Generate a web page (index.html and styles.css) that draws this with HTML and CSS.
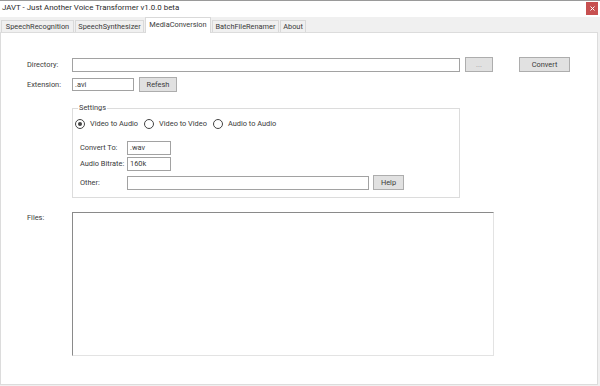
FILE: index.html
```html
<!DOCTYPE html>
<html>
<head>
<meta charset="utf-8">
<link rel="stylesheet" href="styles.css">
</head>
<body>
<div class="window">
  <div class="titlebar">
    <span class="title">JAVT - Just Another Voice Transformer v1.0.0 beta</span>
    <span class="close"><svg width="5" height="5" viewBox="0 0 5 5"><path d="M0.5 0.5 L4.5 4.5 M4.5 0.5 L0.5 4.5" stroke="#fff" stroke-width="1"/></svg></span>
  </div>
  <div class="tabstrip">
    <div class="tab tab-sr">SpeechRecognition</div>
    <div class="tab tab-ss">SpeechSynthesizer</div>
    <div class="tab tab-mc active">MediaConversion</div>
    <div class="tab tab-bf">BatchFileRenamer</div>
    <div class="tab tab-ab">About</div>
  </div>
  <div class="panel">
    <div class="row row-dir">
      <span class="lbl">Directory:</span>
      <span class="input in-dir"></span>
      <span class="btn btn-browse">...</span>
      <span class="btn btn-convert">Convert</span>
    </div>
    <div class="row row-ext">
      <span class="lbl">Extension:</span>
      <span class="input in-ext">.avi</span>
      <span class="btn btn-refresh">Refesh</span>
    </div>
    <div class="group">
      <span class="legend">Settings</span>
      <div class="radios">
        <span class="radio checked"><span class="circle"></span>Video to Audio</span>
        <span class="radio"><span class="circle"></span>Video to Video</span>
        <span class="radio"><span class="circle"></span>Audio to Audio</span>
      </div>
      <div class="grow grow-conv">
        <span class="glbl">Convert To:</span>
        <span class="input in-small">.wav</span>
      </div>
      <div class="grow grow-rate">
        <span class="glbl">Audio Bitrate:</span>
        <span class="input in-small">160k</span>
      </div>
      <div class="grow grow-other">
        <span class="glbl">Other:</span>
        <span class="input in-other"></span>
        <span class="btn btn-help">Help</span>
      </div>
    </div>
    <div class="row row-files">
      <span class="lbl lbl-files">Files:</span>
      <div class="listbox"></div>
    </div>
  </div>
</div>
</body>
</html>
```

FILE: styles.css
```css
* { box-sizing: border-box; }
html, body { margin: 0; padding: 0; }
body {
  width: 600px;
  height: 386px;
  overflow: hidden;
  background: #f0f0f0;
  font-family: Roboto, "Noto Sans", sans-serif;
  font-size: 7.4px;
  color: #3a3a3a;
}
.window {
  width: 600px;
  height: 386px;
  display: flex;
  flex-direction: column;
  background: #f0f0f0;
}
.titlebar {
  height: 17px;
  flex: none;
  background: #fff;
  border-top: 1px solid #9a9a9a;
  display: flex;
  align-items: flex-start;
  justify-content: space-between;
  padding: 0 2px 0 2px;
}
.title {
  line-height: 14px;
  font-size: 7.9px;
  color: #2a2a2a;
}
.close {
  width: 12px;
  height: 13px;
  margin-top: 1px;
  background: #c75050;
  display: flex;
  align-items: center;
  justify-content: center;
}
.close svg { display: block; }
.tabstrip {
  height: 15px;
  flex: none;
  display: flex;
  align-items: flex-end;
  padding-left: 1px;
  position: relative;
  z-index: 1;
}
.tab {
  height: 12px;
  border: 1px solid #d9d9d9;
  border-bottom: none;
  background: #f0f0f0;
  display: flex;
  align-items: center;
  justify-content: center;
  line-height: 10px;
  white-space: nowrap;
}
.tab + .tab { margin-left: 1px; }
.tab-sr { width: 73px; }
.tab-ss { width: 69px; }
.tab-mc { width: 66px; }
.tab-bf { width: 67px; }
.tab-ab { width: 26px; }
.tab.active {
  height: 16px;
  margin-bottom: -1px;
  background: #fff;
  padding-bottom: 2px;
}
.panel {
  flex: 1;
  margin: 0 2px 1px 0;
  background: #fff;
  border: 1px solid #dcdcdc;
  padding: 24px 0 0 26px;
}
.row {
  display: flex;
  align-items: center;
}
.row-dir { height: 15px; }
.row-ext { height: 15px; margin-top: 5px; }
.lbl {
  width: 45px;
  flex: none;
  line-height: 10px;
}
.input {
  display: flex;
  align-items: center;
  height: 14px;
  background: #fff;
  border: 1px solid #a2a2a2;
  padding-left: 2px;
  line-height: 10px;
  flex: none;
}
.in-dir { width: 388px; }
.in-ext { width: 62px; height: 13px; }
.btn {
  display: flex;
  align-items: center;
  justify-content: center;
  height: 15px;
  background: #e1e1e1;
  border: 1px solid #adadad;
  line-height: 10px;
  flex: none;
}
.btn-browse { width: 28px; margin-left: 5px; color: #999; }
.btn-convert { width: 51px; margin-left: 26px; }
.btn-refresh { width: 38px; margin-left: 5px; }
.group {
  position: relative;
  margin: 16px 0 0 45px;
  width: 388px;
  height: 90px;
  border: 1px solid #dcdcdc;
  padding: 9px 0 0 2px;
}
.legend {
  position: absolute;
  top: -6px;
  left: 5px;
  padding: 0 1px;
  background: #fff;
  line-height: 10px;
}
.radios {
  display: flex;
  align-items: center;
  height: 12px;
  gap: 6px;
}
.radio {
  display: flex;
  align-items: center;
  line-height: 10px;
}
.circle {
  width: 10px;
  height: 10px;
  border: 1px solid #444;
  border-radius: 50%;
  margin-right: 5px;
  display: flex;
  align-items: center;
  justify-content: center;
  background: #fff;
}
.radio.checked .circle::after {
  content: "";
  width: 4px;
  height: 4px;
  border-radius: 50%;
  background: #444;
}
.grow {
  display: flex;
  align-items: center;
  padding-left: 5px;
}
.grow-conv { margin-top: 11px; height: 14px; }
.grow-rate { margin-top: 2px; height: 14px; }
.grow-other { margin-top: 4px; height: 15px; }
.glbl { width: 47px; flex: none; line-height: 10px; white-space: nowrap; }
.in-small { width: 44px; }
.in-other { width: 242px; }
.btn-help { width: 31px; margin-left: 4px; }
.row-files {
  margin-top: 14px;
  align-items: flex-start;
}
.lbl-files { padding-top: 1px; }
.listbox {
  width: 422px;
  height: 144px;
  background: #fff;
  border-top: 1px solid #8a8a8a;
  border-left: 1px solid #8a8a8a;
  border-right: 1px solid #e3e3e3;
  border-bottom: 1px solid #e3e3e3;
}
```
